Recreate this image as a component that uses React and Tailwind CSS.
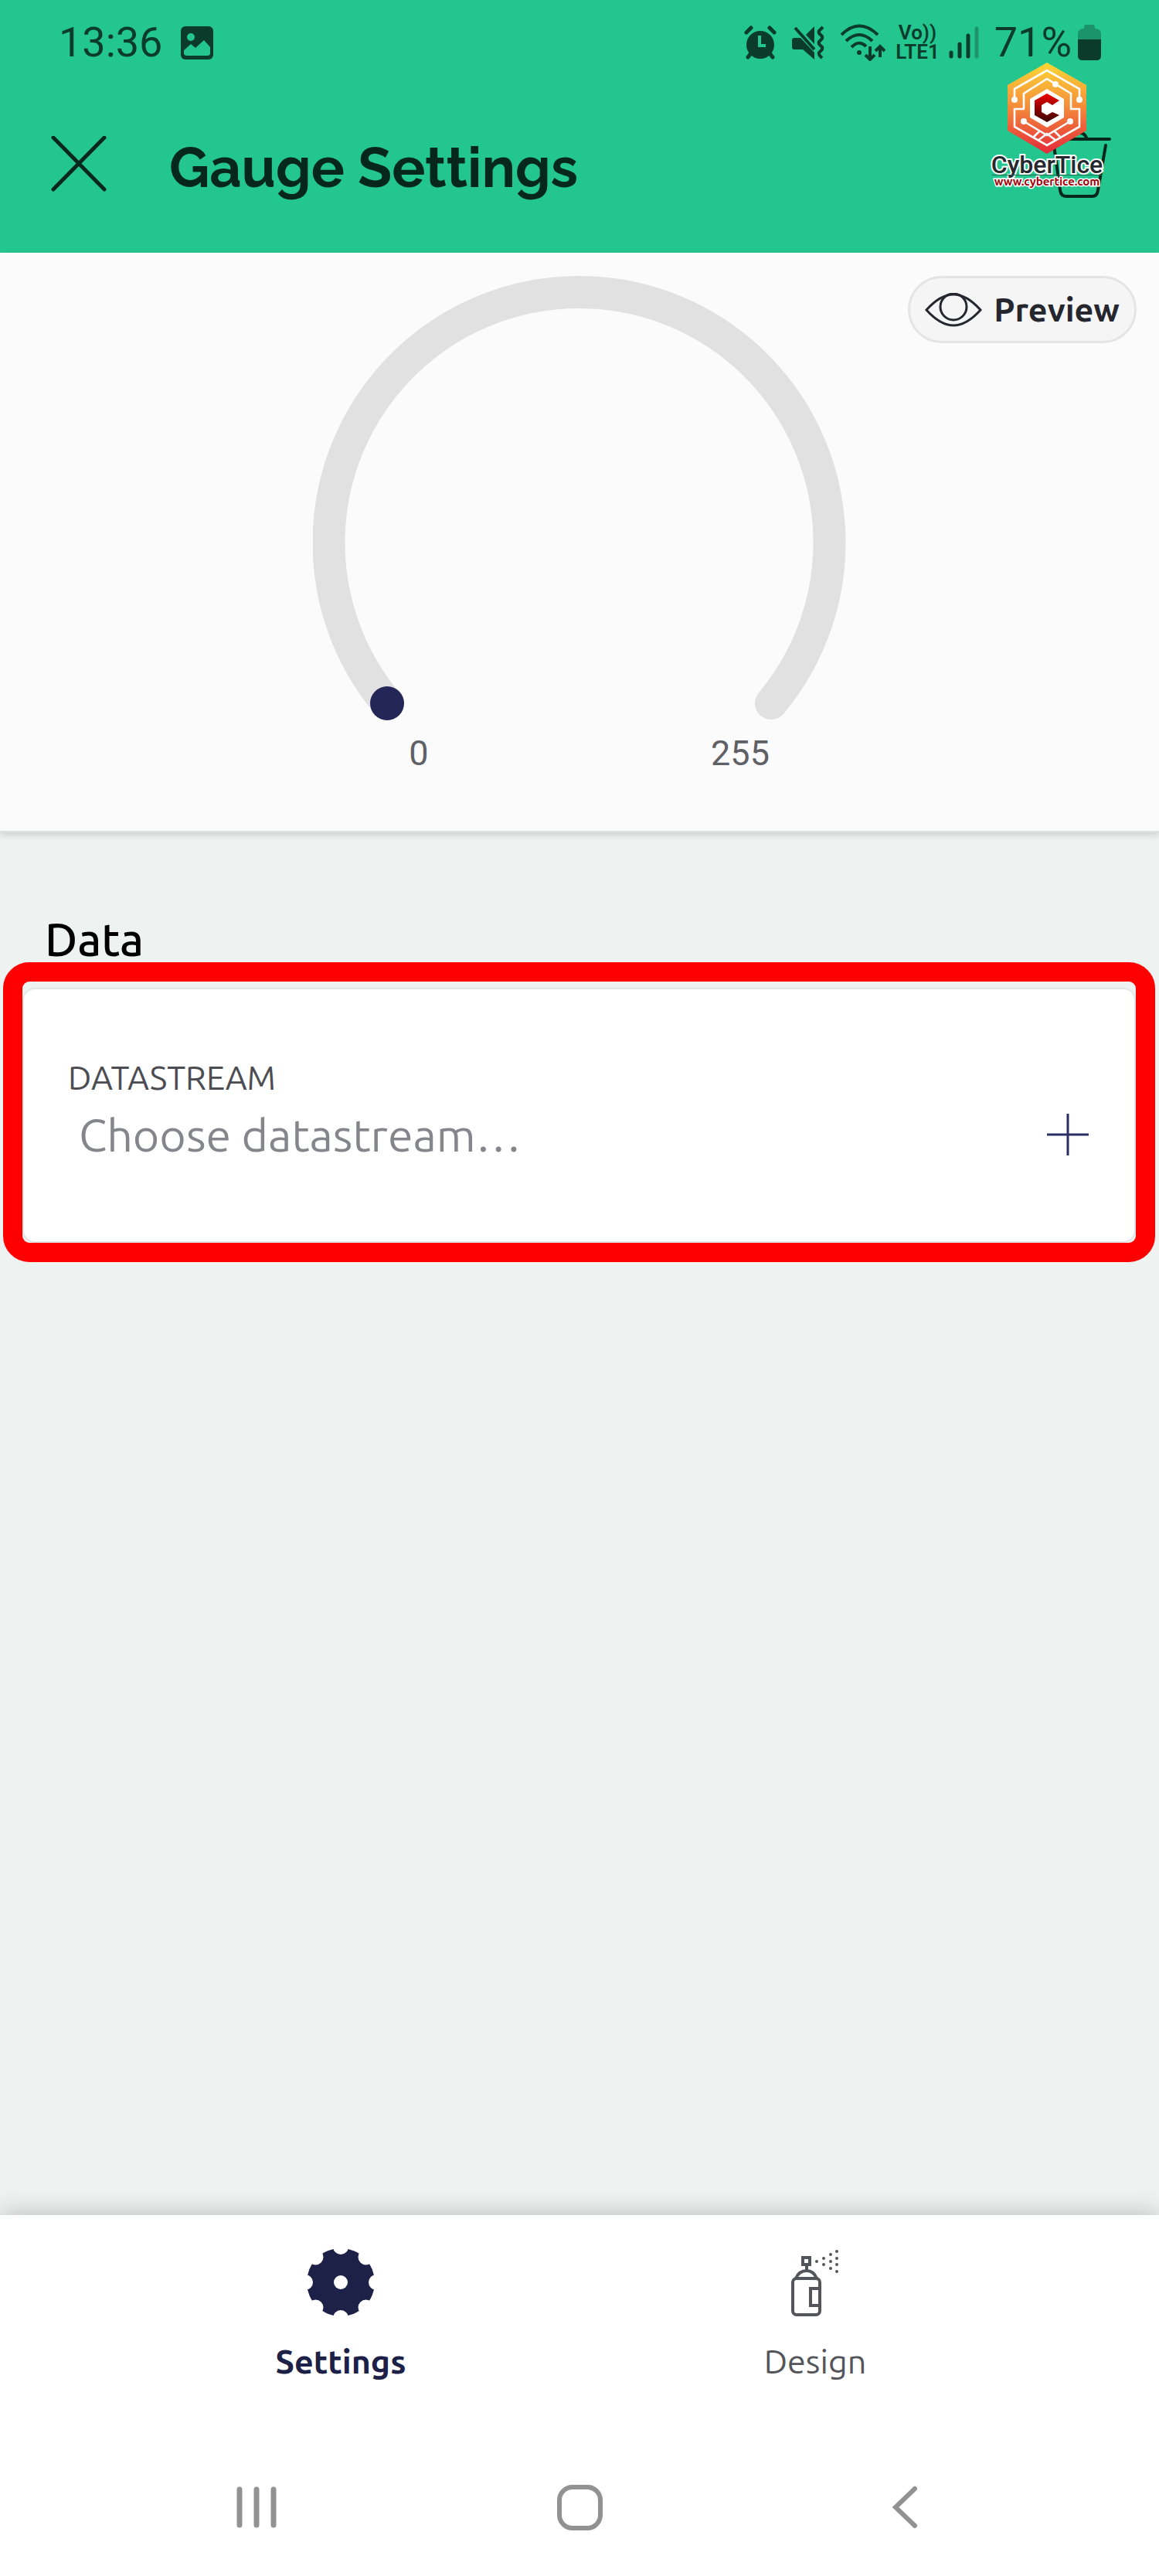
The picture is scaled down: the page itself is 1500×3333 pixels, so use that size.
import { useState } from "react";

const NOTCHES = [0, 45, 90, 135, 180, 225, 270, 315];

// ==========================================
// STATUS BAR ICONS
// ==========================================
function PictureIcon() {
  return (
    <svg width="42" height="43" viewBox="0 0 42 43" fill="none">
      <rect width="42" height="43" rx="6" fill="#0b3b2b" />
      <circle cx="13" cy="14" r="5" fill="#24c68f" />
      <path d="M4 31 L13 23 L19 28 L30 18 L38 27 V35 Q38 38 34 38 H8 Q4 38 4 35 Z" fill="#24c68f" />
    </svg>
  );
}

function AlarmIcon() {
  return (
    <svg width="42" height="44" viewBox="0 0 42 44" fill="none" stroke="#0b3b2b">
      <circle cx="21" cy="25" r="18" fill="#0b3b2b" stroke="none" />
      <path d="M3 9 L9 3 M39 9 L33 3" strokeWidth="5" strokeLinecap="round" />
      <path d="M8 37 L5 41 M34 37 L37 41" strokeWidth="5" strokeLinecap="round" />
      <path d="M20 13 V26 H28" stroke="#24c68f" strokeWidth="4" />
    </svg>
  );
}

function MuteIcon() {
  return (
    <svg width="42" height="44" viewBox="0 0 42 44" fill="none" stroke="#0b3b2b">
      <path d="M3 16 H11 L29 35 V44 L14 31 H3 Q0 31 0 28 V19 Q0 16 3 16 Z" fill="#0b3b2b" stroke="none" />
      <path d="M29 1 V24 L18 12 Z" fill="#0b3b2b" stroke="none" />
      <path d="M4 3 L29 31" strokeWidth="4" />
      <path d="M40 2 L35 7 Q34 9 36 11 L39 14 Q40 16 38 18 L35 21 Q34 23 36 25 L39 28 Q40 30 38 32 L35 35 Q34 38 39 42" strokeWidth="4" />
    </svg>
  );
}

function WifiIcon() {
  return (
    <svg width="60" height="48" viewBox="0 0 60 48" fill="none" stroke="#0b3b2b" strokeWidth="4">
      <path d="M2 14 Q25 -9 49 14" />
      <path d="M8 22 Q25 6 42 22" />
      <path d="M15 30 Q25 20 34 29" />
      <circle cx="25" cy="37" r="3" fill="#0b3b2b" stroke="none" />
      <path d="M39 29 V45 M33 40 L39 46 L45 40" />
      <path d="M52 43 V29 M46 35 L52 29 L58 35" />
    </svg>
  );
}

function SignalIcon() {
  return (
    <svg width="39" height="42" viewBox="0 0 39 42" strokeWidth="5" strokeLinecap="round" stroke="#0b3b2b">
      <path d="M3 34 V39 M14 23 V39 M25 12 V39" />
      <path d="M36 3 V39" stroke="#1b946b" />
    </svg>
  );
}

function BatteryIcon() {
  return (
    <svg width="30" height="46" viewBox="0 0 30 46">
      <path d="M10 0 H20 Q22 0 22 5 H24 Q30 6 30 12 V20 H0 V12 Q0 6 6 5 H8 Q8 0 10 0 Z" fill="#1b946b" />
      <path d="M0 19 H30 V40 Q30 46 24 46 H6 Q0 46 0 40 Z" fill="#0b3b2b" />
    </svg>
  );
}

// ==========================================
// PAGE ICONS
// ==========================================
function CloseIcon() {
  return (
    <svg width="74" height="74" viewBox="0 0 74 74" stroke="#06281c" strokeWidth="5" strokeLinecap="round">
      <path d="M4 2 L70 69 M70 2 L4 69" />
    </svg>
  );
}

function TrashIcon() {
  return (
    <svg width="84" height="86" viewBox="0 0 84 86" fill="none" stroke="#06281c" strokeWidth="4" strokeLinecap="round" strokeLinejoin="round">
      <path d="M2 10 H82 M27 10 Q28 2 34 2 H44 Q50 2 53 10" />
      <path d="M10 18 L18 76 Q19 84 26 84 H60 Q66 84 67 76 L77 18" />
    </svg>
  );
}

function EyeIcon() {
  return (
    <svg width="74" height="44" viewBox="0 0 74 44" fill="none" stroke="#25262e" strokeWidth="3">
      <path d="M2 22 Q20 2 37 2 Q54 2 72 22 Q54 42 37 42 Q20 42 2 22 Z" />
      <circle cx="37" cy="18" r="17" />
    </svg>
  );
}

function GearIcon() {
  return (
    <svg width="88" height="88" viewBox="-44 -44 88 88">
      <circle r="44" fill="#1d2047" />
      {NOTCHES.map((deg) => (
        <circle key={deg} cx="0" cy="-46" r="10" fill="#fff" transform={`rotate(${deg})`} />
      ))}
      <circle r="9" fill="#fff" />
    </svg>
  );
}

function SprayIcon() {
  return (
    <svg width="88" height="88" viewBox="0 0 88 88" fill="none" stroke="#54555a" strokeWidth="4">
      <rect x="15" y="39" width="35" height="47" rx="5" />
      <path d="M19 39 Q23 29 33 29 Q42 29 46 39 M33 29 V22" />
      <rect x="28" y="12" width="9" height="9" />
      <path d="M49 52 H38 V74 H49" />
      <g fill="#54555a" stroke="none">
        <circle cx="46" cy="17" r="2" />
        <circle cx="55" cy="13" r="2" />
        <circle cx="55" cy="21" r="2" />
        <circle cx="64" cy="8" r="2" />
        <circle cx="64" cy="17" r="2" />
        <circle cx="64" cy="26" r="2" />
        <circle cx="72" cy="4" r="2" />
        <circle cx="72" cy="13" r="2" />
        <circle cx="72" cy="21" r="2" />
        <circle cx="72" cy="30" r="2" />
      </g>
    </svg>
  );
}

function CyberTiceLogo() {
  return (
    <div className="absolute top-[80px] right-[65px] w-[160px] flex flex-col items-center font-['Ubuntu','Noto_Sans',sans-serif] pointer-events-none">
      <svg width="104" height="120" viewBox="0 0 104 120" fill="none" stroke="#fff" strokeWidth="2.6">
        <defs>
          <linearGradient id="hex" x1="0" y1="0" x2="0" y2="1">
            <stop offset="0" stopColor="#fdd835" />
            <stop offset=".45" stopColor="#f5923a" />
            <stop offset="1" stopColor="#e5283b" />
          </linearGradient>
          <linearGradient id="c" x1="0" y1="0" x2="0" y2="1">
            <stop offset="0" stopColor="#f00000" />
            <stop offset="1" stopColor="#3a0000" />
          </linearGradient>
        </defs>
        <path d="M52 1 L103 30 V89 L52 119 L1 89 V30 Z" fill="url(#hex)" stroke="none" />
        <path d="M10 48 V35 L52 11 L94 35 V48" />
        <path d="M22 61 V41 L52 22 L83 41 V61 H94 V84 L52 108 L10 84 V61 H23" />
        <path d="M22 77 L52 95 L82 77 M43 89 L35 97 M61 89 L69 97 M40 102 L52 93 L64 102" />
        <g fill="#fff" stroke="none">
          <circle cx="10" cy="49" r="4" />
          <circle cx="94" cy="49" r="4" />
          <circle cx="63" cy="29" r="4" />
          <circle cx="22" cy="77" r="4" />
          <circle cx="82" cy="77" r="4" />
          <path d="M52 35 L74 48 V72 L52 85 L30 72 V48 Z" />
        </g>
        <path d="M52 41 L68 50 L59 56 L52 52 L45 56 V65 L52 69 L59 65 L68 69 L52 78 L36 69 V50 Z" fill="url(#c)" stroke="none" />
      </svg>
      <span className="text-[32px] leading-[26px] font-medium font-['Roboto',sans-serif] text-[#25282d] [-webkit-text-stroke:4px_white] [paint-order:stroke_fill]">
        CyberTice
      </span>
      <span className="w-[142px] border-t border-[#1b6b50]" />
      <span className="text-[15px] leading-[16px] font-bold text-[#a00008] [-webkit-text-stroke:3px_white] [paint-order:stroke_fill]">
        www.cybertice.com
      </span>
    </div>
  );
}

// ==========================================
// SECTIONS
// ==========================================
function StatusBar() {
  return (
    <div className="h-[110px] pl-[76px] pr-[75px] flex items-center justify-between font-['Roboto',sans-serif] text-[54px] leading-none text-[#0b3b2b]">
      <div className="flex items-center gap-6">
        <span>13:36</span>
        <PictureIcon />
      </div>

      <div className="flex items-center">
        <div className="flex items-center gap-5">
          <AlarmIcon />
          <MuteIcon />
          <WifiIcon />
        </div>
        <div className="ml-3 flex flex-col items-center text-[26px] leading-[25px] font-semibold">
          <span>Vo))</span>
          <span>LTE1</span>
        </div>
        <div className="ml-3 flex items-center gap-5">
          <SignalIcon />
          <span>71%</span>
        </div>
        <div className="ml-2">
          <BatteryIcon />
        </div>
      </div>
    </div>
  );
}

function Gauge({ min, max }) {
  return (
    <div className="w-[690px] max-w-full mx-auto">
      <svg viewBox="0 0 690 576" className="block w-full" fill="none">
        <path d="M96 553 A324 324 0 1 1 593 553" stroke="#e1e1e1" strokeWidth="42" strokeLinecap="round" />
        <circle cx="96" cy="553" r="22" fill="#242657" />
      </svg>
      <div className="mt-4 px-[97px] flex justify-between font-['Roboto',sans-serif] text-[45px] leading-[52px] text-[#5f6065]">
        <span className="w-[80px] text-center">{min}</span>
        <span className="w-[80px] text-center">{max}</span>
      </div>
    </div>
  );
}

export default function App() {

  const [tab, setTab] = useState("settings");

  return (
    <div className="min-h-screen flex flex-col bg-[#eef3f2] font-['Ubuntu','Noto_Sans',sans-serif]">

      {/* header */}
      <header className="relative bg-[#24c68f] pb-3">
        <StatusBar />
        <div className="h-[205px] pl-[65px] pr-[62px] flex items-center">
          <button aria-label="Close">
            <CloseIcon />
          </button>
          <h1 className="ml-20 pt-2 flex-1 font-['Raleway','Lato',sans-serif] font-bold text-[72px] leading-[88px] text-[#06281c]">
            Gauge Settings
          </h1>
          <button aria-label="Delete">
            <TrashIcon />
          </button>
        </div>
        <CyberTiceLogo />
      </header>


      {/* gauge preview */}
      <section className="relative bg-[#fbfbfb] pt-[30px] pb-[74px] border-b-2 border-[#dfe1e1] shadow-[0_4px_8px_#00000022]">
        <Gauge min={0} max={255} />
        <button className="absolute top-[30px] right-[29px] h-[87px] px-[19px] flex items-center gap-[15px] rounded-full border-3 border-[#e4e4e4] bg-[#f5f5f5] text-[43px] font-bold text-[#25262e]">
          <EyeIcon />
          Preview
        </button>
      </section>


      {/* data */}
      <main className="flex-1 pt-[108px] pl-1 pr-[5px]">
        <h2 className="pl-[54px] text-[59px] leading-[60px] font-medium text-black">Data</h2>
        <div className="rounded-[34px] border-25 border-[#ff0000] pt-2">
          <div className="h-[330px] rounded-2xl border-2 border-[#e2e6e5] bg-white pt-[84px] px-[57px]">
            <label htmlFor="datastream" className="block text-[43px] leading-[60px] text-[#4c4d52]">
              DATASTREAM
            </label>
            <button
              id="datastream"
              className="w-full pl-[14px] pr-[2px] flex items-center justify-between text-[59px] leading-[88px] text-[#85868b]"
            >
              Choose datastream…
              <svg width="54" height="54" viewBox="0 0 54 54" stroke="#2c2f66" strokeWidth="3">
                <path d="M27 0 V54 M0 27 H54" />
              </svg>
            </button>
          </div>
        </div>
      </main>


      {/* tabs */}
      <nav className="h-[294px] pl-[134px] pr-[138px] pt-[43px] flex items-start bg-white shadow-[0_-4px_28px_#00000033]">
        <button
          onClick={() => setTab("settings")}
          aria-pressed={tab === "settings"}
          className="flex-1 flex flex-col items-center gap-[26px] text-[43px] leading-[64px] font-bold text-[#1d2047]"
        >
          <GearIcon />
          Settings
        </button>
        <button
          onClick={() => setTab("design")}
          aria-pressed={tab === "design"}
          className="flex-1 flex flex-col items-center gap-[26px] text-[43px] leading-[64px] text-[#54555a]"
        >
          <SprayIcon />
          Design
        </button>
      </nav>


      {/* system navigation */}
      <div className="h-[173px] px-[120px] flex bg-white">
        <button aria-label="Recent apps" className="flex-1 flex justify-center pt-[55px]">
          <svg width="60" height="60" viewBox="0 0 60 60" stroke="#929292" strokeWidth="7" strokeLinecap="round">
            <path d="M10 6 V52 M32 6 V52 M54 6 V52" />
          </svg>
        </button>
        <button aria-label="Home" className="flex-1 flex justify-center pt-[55px]">
          <svg width="60" height="60" viewBox="0 0 60 60" fill="none" stroke="#929292" strokeWidth="6">
            <rect x="4" y="3" width="53" height="53" rx="17" />
          </svg>
        </button>
        <button aria-label="Back" className="flex-1 flex justify-center pt-[55px]">
          <svg width="60" height="60" viewBox="0 0 60 60" fill="none" stroke="#929292" strokeWidth="6" strokeLinecap="round">
            <path d="M44 5 L19 29 L44 53" />
          </svg>
        </button>
      </div>
    </div>
  );
}
